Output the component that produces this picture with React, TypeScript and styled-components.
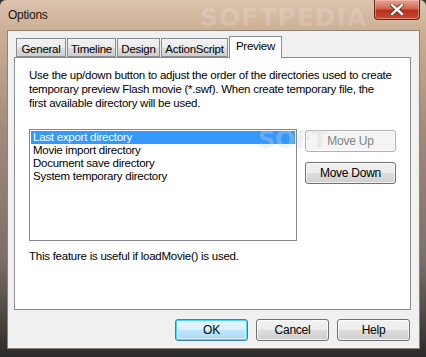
import React from 'react';
import styled, { createGlobalStyle } from 'styled-components';

const GlobalStyle = createGlobalStyle`
  html, body {
    margin: 0;
    padding: 0;
    background: #3a3430;
  }
  * {
    box-sizing: border-box;
  }
`;

const FONT = `'Liberation Sans', 'DejaVu Sans', sans-serif`;

const Window = styled.div`
  position: relative;
  width: 426px;
  height: 357px;
  display: flex;
  flex-direction: column;
  padding: 0 6px 8px 7px;
  font-family: ${FONT};
  font-size: 11.5px;
  letter-spacing: -0.25px;
  color: #000;
  background: linear-gradient(180deg, #dcc3ad 0px, #cdb096 30px, #a08b7b 130px, #7b6f68 260px, #2c2a29 357px);
  border-radius: 6px 6px 0 0;
  overflow: hidden;
`;

const TitleBar = styled.div`
  height: 30px;
  display: flex;
  align-items: flex-start;
  position: relative;
`;

const Title = styled.div`
  padding: 8px 0 0 1px;
  font-size: 12px;
  color: #1b1410;
`;

const Watermark = styled.div`
  position: absolute;
  left: 193px;
  top: 3px;
  font-size: 25px;
  font-weight: bold;
  letter-spacing: 1px;
  color: rgba(255, 255, 255, 0.16);
  font-family: 'DejaVu Sans', sans-serif;
  pointer-events: none;
`;

const CloseButton = styled.div`
  margin-left: auto;
  width: 46px;
  height: 20px;
  border: 1px solid #5a2a20;
  border-top: none;
  border-radius: 0 0 4px 4px;
  background: linear-gradient(180deg, #e7a596 0%, #d2674f 45%, #b5301b 55%, #c94a31 100%);
  display: flex;
  align-items: center;
  justify-content: center;
  box-shadow: inset 0 0 0 1px rgba(255, 200, 190, 0.45);
`;

const Client = styled.div`
  flex: 1;
  display: flex;
  flex-direction: column;
  background: #f0f0f0;
  border: 1px solid #8e8279;
  padding: 6px 8px 7px 6px;
`;

const TabStrip = styled.div`
  display: flex;
  align-items: flex-end;
  height: 20px;
  padding-left: 2px;
  position: relative;
  z-index: 1;
`;

const Tab = styled.div<{ active?: boolean; width: number }>`
  width: ${(p) => p.width}px;
  height: ${(p) => (p.active ? '22px' : '19px')};
  margin-right: ${(p) => (p.active ? '0' : '1px')};
  margin-bottom: ${(p) => (p.active ? '-1px' : '0')};
  padding-top: ${(p) => (p.active ? '3px' : '4px')};
  text-align: center;
  border: 1px solid #898c95;
  border-bottom: ${(p) => (p.active ? 'none' : '1px solid #898c95')};
  background: ${(p) => (p.active ? '#fff' : 'linear-gradient(180deg, #f2f2f2 0%, #ebebeb 50%, #dddddd 51%, #cfcfcf 100%)')};
  white-space: nowrap;
`;

const Panel = styled.div`
  flex: 1;
  background: #fff;
  border: 1px solid #898c95;
  padding: 10px 14px 0 14px;
  display: flex;
  flex-direction: column;
`;

const Paragraph = styled.div`
  line-height: 14px;
  white-space: nowrap;
`;

const ListArea = styled.div`
  display: flex;
  margin-top: 19px;
  gap: 8px;
`;

const ListBox = styled.div`
  width: 270px;
  height: 112px;
  border: 1px solid #828790;
  padding: 1px;
  position: relative;
`;

const ListItem = styled.div<{ selected?: boolean }>`
  height: 13px;
  line-height: 13px;
  padding-left: 2px;
  background: ${(p) => (p.selected ? '#3399ff' : 'transparent')};
  color: ${(p) => (p.selected ? '#fff' : '#000')};
`;

const ListWatermark = styled.div`
  position: absolute;
  left: 228px;
  top: -4px;
  font-size: 24px;
  font-weight: bold;
  color: rgba(210, 210, 210, 0.35);
  font-family: 'DejaVu Sans', sans-serif;
  white-space: nowrap;
  pointer-events: none;
`;

const SideButtons = styled.div`
  display: flex;
  flex-direction: column;
  gap: 10px;
  padding-top: 1px;
`;

const Button = styled.div<{ disabled?: boolean; primary?: boolean; width?: number }>`
  width: ${(p) => p.width ?? 91}px;
  height: 22px;
  display: flex;
  align-items: center;
  justify-content: center;
  border-radius: 3px;
  font-size: 12px;
  border: 1px solid ${(p) => (p.disabled ? '#adb2b5' : p.primary ? '#3c7fb1' : '#707070')};
  color: ${(p) => (p.disabled ? '#838383' : '#000')};
  background: ${(p) =>
    p.disabled
      ? '#f4f4f4'
      : p.primary
      ? 'linear-gradient(180deg, #eaf6fd 0%, #d9f0fc 50%, #bee6fd 51%, #a7d9f5 100%)'
      : 'linear-gradient(180deg, #f2f2f2 0%, #ebebeb 50%, #dddddd 51%, #cfcfcf 100%)'};
  box-shadow: ${(p) =>
    p.primary ? 'inset 0 0 0 1px #48d4ff, inset 0 0 0 2px rgba(255,255,255,0.6)' : 'inset 0 0 0 1px rgba(255,255,255,0.7)'};
`;

const Note = styled.div`
  margin-top: 8px;
  line-height: 14px;
`;

const ButtonRow = styled.div`
  display: flex;
  justify-content: flex-end;
  gap: 8px;
  padding-top: 9px;
  margin-right: 1px;
`;

const tabs = [
  { label: 'General', width: 50 },
  { label: 'Timeline', width: 49 },
  { label: 'Design', width: 43 },
  { label: 'ActionScript', width: 67 },
  { label: 'Preview', width: 53, active: true },
];

const App: React.FC = () => {
  return (
    <React.Fragment>
      <GlobalStyle />
      <Window>
        <TitleBar>
          <Title>Options</Title>
          <Watermark>SOFTPEDIA</Watermark>
          <CloseButton>
            <svg width="14" height="11" viewBox="0 0 14 11">
              <path d="M2 1 L12 10 M12 1 L2 10" stroke="#5a2a22" strokeWidth="4" strokeLinecap="square" />
              <path d="M2 1 L12 10 M12 1 L2 10" stroke="#fff" strokeWidth="2.4" strokeLinecap="square" />
            </svg>
          </CloseButton>
        </TitleBar>
        <Client>
          <TabStrip>
            {tabs.map((t) => (
              <Tab key={t.label} width={t.width} active={t.active}>
                {t.label}
              </Tab>
            ))}
          </TabStrip>
          <Panel>
            <Paragraph>
              Use the up/down button to adjust the order of the directories used to create
              <br />
              temporary preview Flash movie (*.swf). When create temporary file, the
              <br />
              first available directory will be used.
            </Paragraph>
            <ListArea>
              <ListBox>
                <ListItem selected>Last export directory</ListItem>
                <ListItem>Movie import directory</ListItem>
                <ListItem>Document save directory</ListItem>
                <ListItem>System temporary directory</ListItem>
                <ListWatermark>SOFT</ListWatermark>
              </ListBox>
              <SideButtons>
                <Button disabled>Move Up</Button>
                <Button>Move Down</Button>
              </SideButtons>
            </ListArea>
            <Note>This feature is useful if loadMovie() is used.</Note>
          </Panel>
          <ButtonRow>
            <Button primary width={73}>OK</Button>
            <Button width={73}>Cancel</Button>
            <Button width={73}>Help</Button>
          </ButtonRow>
        </Client>
      </Window>
    </React.Fragment>
  );
};

export default App;
